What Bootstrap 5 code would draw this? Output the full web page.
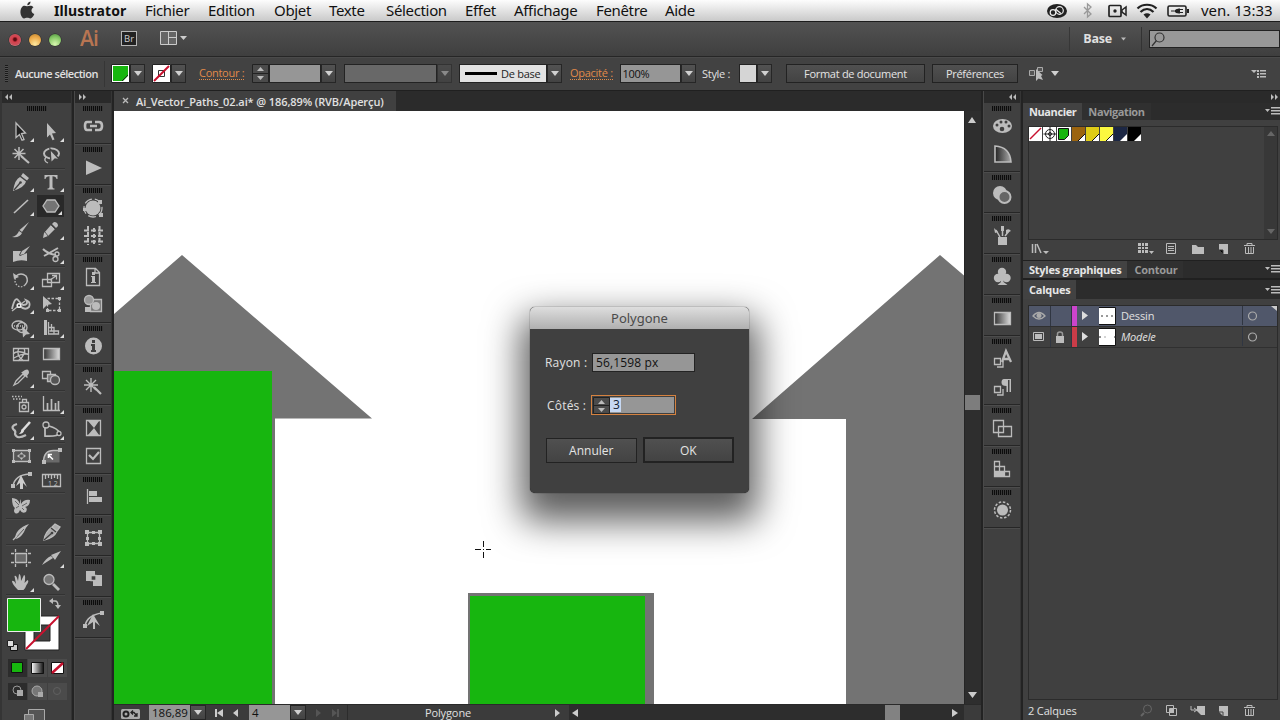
<!DOCTYPE html>
<html lang="fr">
<head>
<meta charset="utf-8">
<title>Illustrator</title>
<link href="https://cdn.jsdelivr.net/npm/bootstrap@5.3.0/dist/css/bootstrap.min.css" rel="stylesheet">
<style>
body{width:1280px;height:720px;overflow:hidden;background:#2b2b2b;font-family:"Open Sans","Noto Sans",sans-serif;font-size:11px;line-height:1;color:#e0e0e0}
svg{display:block;flex:none}
.macbar{height:22px;flex:none;background:linear-gradient(#fdfdfd,#c9c9c9);border-bottom:1px solid #1c1c1c;color:#111;font:15px/21px "Noto Sans",sans-serif;display:grid;grid-template-columns:54px 91px 63px 66px 55px 57px 79px 49px 82px 69px 380px 1fr;white-space:nowrap;letter-spacing:-.34px}
.macbar b{font-size:14px;letter-spacing:.08px}
#clock{letter-spacing:0}
.appbar{height:35px;flex:none;background:linear-gradient(#525252,#3f3f3f);border-bottom:1px solid #262626;padding-left:9px}
.light{width:12px;height:12px;border-radius:50%;margin:1px 8px 0 0;box-shadow:0 0 0 .5px #2c2c2c}
.l-red{background:radial-gradient(circle at 50% 45%,#5a0c12 0 14%,#d9404c 32%,#c9505a 60%,#f5b5b5)}
.l-yel{background:radial-gradient(circle at 50% 85%,#ffe9a0,#eba848 60%,#b8822f)}
.l-grn{background:radial-gradient(circle at 50% 85%,#d8f7b0,#84c765 60%,#4d8a3d)}
.ailogo{font:600 21px/24px "Open Sans";color:#b87552;width:39px;letter-spacing:-.8px;margin-left:11px;margin-top:-2px}
.wspace{font-size:12.500px;letter-spacing:-.2px}
.search{width:131px;height:18px;background:#989898;border:1px solid #222}
.ctlbar{height:34px;flex:none;background:#424242;border-bottom:1px solid #202020;border-top:1px solid #4a4a4a;display:grid;align-items:center;white-space:nowrap;padding-bottom:1px;letter-spacing:-.28px;
 grid-template-columns:15px 96px 19px 22px 19px 28px 53px 17px 52px 23px 93px 22px 88px 23px 50px 61px 21px 37px 18px 29px 139px 7px 86px 11px 23px 199px 1fr}
.selname{font-weight:600;letter-spacing:-.48px;border-right:1px solid #363636;width:90px;height:26px;line-height:26px}
.bx{height:19px;border:1px solid #232323}
.fld{background:#969696;color:#111}
.dd{width:15px;height:19px;border:1px solid #262626;background:linear-gradient(#525252,#434343)}
.dd,.tri{display:flex;align-items:center;justify-content:center}
.tri{width:6px}
.dd::after,.tri::after{content:"";border:4px solid transparent;border-top:5px solid #d0d0d0;border-bottom:0}
.org{color:#e08a4a;border-bottom:1px dotted #e08a4a;padding-bottom:1px;justify-self:start}
.pbtn{border:1px solid #222;background:linear-gradient(#505050,#434343);color:#e4e4e4;text-align:center;height:19px;line-height:17px}
#widthprofile{background:#686868}#brush{background:#e2e2e2;color:#222}#styl{background:#d5d5d5}#opac{line-height:17px}
.grip{width:20px;height:5px;background:repeating-linear-gradient(90deg,#0c0c0c 0 1px,#383838 1px 2px);flex:none}
.vgrip{width:3px;height:17px;background:repeating-linear-gradient(#1a1a1a 0 1px,#505050 1px 2px);margin-left:5px}
.workarea{height:629px}
.hd{height:12px;background:#2a2a2a;flex:none}
.pane{background:#404040}
.vrule{width:2px;background:#232323}
.tools{width:72px;border-left:2px solid #353535;border-right:1px solid #333}
.toolgrip{height:17px;padding-top:3px}
.tgroup{display:grid;grid-template-columns:30px 30px;grid-auto-rows:24px;margin-left:4px;width:59px;border-bottom:1px solid #333;box-shadow:0 1px #494949;margin-bottom:1px}
.tgroup>span{display:flex;align-items:center;justify-content:center;position:relative}
.more::after{content:"";position:absolute;right:2px;bottom:2px;border:2px solid;border-color:transparent #ddd #ddd transparent}
.tgroup>.picked{background:#292929;margin:1px 2px 1px 1px}
.ic{width:22px;height:22px;fill:none;stroke:#bcbcbc;stroke-width:1.3}
.ic .f,.f{fill:#bcbcbc;stroke:none}
.dk,.ic .dk{fill:#404040;stroke:none}
.fillbox{height:126px;overflow:hidden}
.strip{width:38px;border-right:1px solid #353535;border-left:1px solid #494949}
.sgroup{height:41px;border-bottom:1px solid #262626;box-shadow:0 1px #4c4c4c;padding-top:3px;display:flex;flex-direction:column;align-items:center}
.sgroup .ic{margin-top:3px;margin-bottom:3px}
.sgroup.two{height:69px}
.doctab{width:282px;height:20px;background:#404040;font-weight:600;padding-left:8px;letter-spacing:-.1px}
.canvas{width:850px;height:593px;background:#fff;position:relative}
.dlg{position:absolute;left:416px;top:196px;width:219px;height:186px;border-radius:5px;background:#404040;box-shadow:0 19px 36px 9px rgba(0,0,0,.64),0 0 1px #000;font-size:12px}
.dlgtitle{height:22px;border-radius:5px 5px 0 0;background:linear-gradient(#dedede,#b0b0b0);color:#4a4a4a;text-align:center;font:13px/23px "Noto Sans"}
#row1{padding:24px 0 0 15px}.dlab{width:47px;white-space:nowrap;letter-spacing:.2px}#radius{width:103px;padding-left:3px;line-height:17px;letter-spacing:.15px}
#row2{padding:23px 0 0 17px}#row2 .dlab{width:44px;padding-top:1px}#sides{width:85px;height:20px;border:1px solid #d58240;padding:1px}
#numsel{background:#c7d8f2;color:#123;width:11px;height:14px;line-height:14px;margin:1px 0;padding-left:3px}
#row3{padding:22px 15px 0 16px;gap:6px}#cancel{width:91px;height:25px;line-height:23px;margin-top:1px}#okb{width:92px;height:26px;border-width:2px;line-height:23px}
.scrollv{width:17px;background:#2e2e2e;border-left:1px solid #252525}
.statusbar{height:16px;background:#3b3b3b;border-top:1px solid #2a2a2a;white-space:nowrap}
.sfield{height:15px;line-height:15px;padding-left:3px;font-size:11.500px;width:41px}.sdd{width:16px;height:15px}
#toolname{width:201px;border-left:1px solid #2c2c2c;text-align:center;line-height:16px;font-size:11px;letter-spacing:-.1px}
.tabstrip{background:#2c2c2c;font-weight:700;white-space:nowrap;height:17px;flex:none;letter-spacing:-.4px}
.tabstrip span{padding:0 6px;line-height:17px}
.tabon{background:#424242;color:#e6e6e6}
.taboff{background:#303030;color:#999}
#t2{border-top:1px solid #202020;height:18px;letter-spacing:-.26px}#t2 span{padding:0 6px 0 7px}#t2 .tabon{padding-left:6px}
#t3{border-top:2px solid #202020;height:21px;letter-spacing:-.25px}#t3 span{line-height:19px}
.swatches{height:140px;padding:6px 0 0 5px}
.swarea{border:1px solid #2b2b2b;height:114px;width:250px}
#layers{margin:6px 2px 0 5px;border:1px solid #2b2b2b;height:395px}
.lrow{height:21px;display:grid;grid-template-columns:22px 21px 5px 22px 22px 122px 1fr;align-items:center;border-bottom:1px solid #303030}
.lrow>*{height:20px;display:flex;align-items:center}
.lrow>.lname{height:19px;margin-bottom:1px;letter-spacing:-.15px}
.sel{background:#50576a}
.vl{border-right:1px solid #303642}
.c-dessin{background:#cc44cc}.c-modele{background:#cb3c48}
#lfoot{height:20px;padding-left:5px;letter-spacing:-.15px}
</style>
</head>
<body class="d-flex flex-column">
<header class="macbar">
<svg width="54" height="21" viewBox="0 0 54 21"><path fill="#333" d="M30.500 1.500c.2 2-1.300 3.800-3.200 3.800-.2-1.900 1.400-3.600 3.200-3.800zM22 7c1.600-2 3.600-1 5-.7 1.400.1 4-1.700 6.500 1-3 2-2.500 5.500.8 6.800-.9 2.300-2.400 4.400-3.900 4.400-1.200 0-1.700-.7-3.200-.7s-2 .7-3.100.7C21.500 18.500 18.500 11.500 22 7z"/></svg>
<b>Illustrator</b><span>Fichier</span><span>Edition</span><span>Objet</span><span>Texte</span><span>Sélection</span><span>Effet</span><span>Affichage</span><span>Fenêtre</span><span>Aide</span>
<span class="d-flex">
<svg width="156" height="21" viewBox="1045 0 156 21" fill="none" stroke="#222"><ellipse cx="1057" cy="11" rx="10" ry="7" fill="#222" stroke="none"/><g stroke="#eee" stroke-width="1.200"><circle cx="1053" cy="12.500" r="2.800"/><circle cx="1059.500" cy="10.500" r="3.800"/><path d="M1055.500 9l5.500 4.500"/></g><path stroke="#999" stroke-width="1.300" d="M1084 7l7 7-3.500 3V4l3.500 3-7 7"/><rect x="1109" y="5.500" width="12" height="11" rx="1" stroke-width="1.700"/><circle cx="1115" cy="11" r="1.700" fill="#222" stroke="none"/><path stroke-width="1.500" d="M1122 10l4-3v8l-4-3z"/><path stroke-width="2.200" d="M1137.500 8.500c5-5 14-5 19 0M1140.500 12c4-3.800 9-3.800 13 0"/><path fill="#222" stroke="none" d="M1143.500 14.500q3.500-2.500 7 0l-3.500 4z"/><rect x="1168" y="6" width="18" height="10" rx="1.500" stroke-width="1.600"/><path stroke-width="2" d="M1188 9v4"/><path d="M1171 11h3M1180 9.500h3M1180 12.500h3"/><path fill="#222" stroke="none" d="M1174 11q2-3 6-2.500v5q-4 .5-6-2.500z"/></svg>
<span id="clock">ven. 13:33</span></span>
</header>

<div class="appbar d-flex align-items-center">
<i class="light l-red"></i><i class="light l-yel"></i><i class="light l-grn"></i>
<span class="ailogo">Ai</span>
<svg width="90" height="20" viewBox="0 0 90 20"><rect x="2.500" y="2.500" width="15" height="14" fill="#222" stroke="#b5b5b5"/><text x="5" y="13" font-size="9.500" fill="#ccc">Br</text><path d="M41.500 2.500h16v13h-16zM49.500 2.500v13M49.500 8.500h8" fill="#666" stroke="#ccc"/><path d="M61 7h7l-3.500 4z" fill="#ccc"/></svg>
<svg class="ms-auto" width="14" height="24"><path d="M.5 0v24" stroke="#373737"/></svg><span class="fw-bold wspace">Base</span>
<svg width="37" height="24" viewBox="0 0 37 24"><path d="M9 10.500h5l-2.500 3z" fill="#bbb"/><path d="M29.500 0v24" stroke="#333"/></svg>
<span class="search"><svg width="20" height="16" viewBox="0 0 20 16" fill="none" stroke="#333" stroke-width="1.200"><circle cx="9.500" cy="6.500" r="4.500"/><path d="M6.500 9.500L2 15"/></svg></span>
</div>

<div class="ctlbar">
<span class="vgrip"></span><span class="selname">Aucune sélection</span>
<svg width="19" height="19"><path fill="#fff" stroke="#222" d="M.5.500h18v18H.5z"/><path fill="#17b60f" d="M2 2h15v10l-5 5H2z"/><path stroke="#222" d="M17 11l-6 6"/></svg><span class="dd"></span>
<svg width="19" height="19"><path fill="#fff" stroke="#222" d="M.5.500h18v18H.5z"/><path fill="none" stroke="#333" d="M6.500 6.500h6v6h-6z"/><path stroke="#c8102e" stroke-width="2" d="M2 17L17 2"/></svg><span class="dd"></span>
<span class="org">Contour :</span>
<svg width="17" height="19"><path fill="#4b4b4b" stroke="#222" d="M.5.500h16v18H.5zM.5 9.500h16"/><path class="f" d="M5 7l3.500-4L12 7zM5 12l3.500 4 3.500-4z"/></svg>
<span class="bx fld"></span><span class="dd"></span>
<span class="bx" id="widthprofile"></span><span class="dd opacity-50"></span>
<span class="bx d-flex align-items-center" id="brush"><svg width="41" height="15"><path d="M5 7.500h32" stroke="#000" stroke-width="3"/></svg>De base</span><span class="dd"></span>
<span class="org">Opacité :</span>
<span class="bx fld" id="opac">&thinsp;100%</span><span class="dd"></span>
<span>Style :</span><span class="bx" id="styl"></span><span class="dd"></span>
<span class="pbtn">Format de document</span><span></span><span class="pbtn">Préférences</span><span></span>
<svg width="24" height="19"><path fill="#555" stroke="#aaa" d="M.5 6.500h5v5h-5zM8.500 3.500h5v4h-5z"/><path class="f" d="M7 5v12l2.500-2.500L14 16l-2-4 1.500-1z"/></svg><span class="tri"></span>
<svg width="20" height="19"><path class="f" d="M0 6h6L3 9zM6 6h2v2H6zM9 6h6v1.500H9zM6 9h2v2H6zM9 9h6v1.500H9zM6 12h2v2H6zM9 12h6v1.500H9z"/></svg>
</div>

<main class="workarea d-flex">
<aside class="tools pane d-flex flex-column">
<div class="hd"><svg width="20" height="12"><path class="f" d="M6 3v6L3 6zM10 3v6L7 6z"/></svg></div>
<div class="toolgrip d-flex justify-content-center"><span class="grip"></span></div>
<div class="tgroup">
<span class="more"><svg class="ic"><path fill="#222" d="M6 2l9.500 10-4 .5 2.500 6-2 .7-2.500-5.700L6 16.500z"/></svg></span>
<span class="more"><svg class="ic"><path class="f" d="M7 2l9 10-4 .5 2.500 6-2 .7L10 13.500 7 16.500z"/></svg></span>
<span><svg class="ic"><path stroke-width="2.200" d="M11 11l8 7"/><path d="M9 2v13M2.500 8.500h13M4.500 4l9 9M13.500 4l-9 9" stroke-width="1.500"/></svg></span>
<span><svg class="ic"><ellipse cx="11.500" cy="8.500" rx="7.500" ry="5" stroke-width="2"/><path d="M6 12q-3 4 2 6"/><path fill="#bcbcbc" stroke="#404040" d="M10 4l10 11-5-1-4 4z"/></svg></span>
</div>
<div class="tgroup">
<span class="more"><svg class="ic"><path class="f" d="M13 2l6 5-2 2.500L11 5zM10 6l6 4.500Q15 16 3 20 5 8 10 6z"/><path stroke="#404040" d="M4 19l6-7"/><circle cx="10.500" cy="11.500" r="1.300" class="dk"/></svg></span>
<span class="more"><svg class="ic"><path class="f" d="M4.500 4h13v4h-1q-.5-2.800-4-2.800V16q0 1.500 2 1.500v1h-7v-1q2 0 2-1.500V5.200q-3.500 0-4 2.800h-1z"/></svg></span>
<span class="more"><svg class="ic"><path d="M4 18L18 5" stroke-width="1.700"/></svg></span>
<span class="more picked"><svg class="ic"><path fill="#747474" d="M7 5h8l4 6-4 6H7l-4-6z"/></svg></span>
<span><svg class="ic"><path class="f" d="M19 3l-7 10-2.500-2zM9 12l3 2q-2 5-10 4 5-1 7-6z"/></svg></span>
<span class="more"><svg class="ic"><path class="f" d="M14 3q4 0 4 4l-2 2-4-4zM11 6l4 4-7 7-5 2 1-5z"/><path stroke="#404040" stroke-width=".8" d="M11 6l4 4M5 13l3 4"/></svg></span>
<span><svg class="ic"><path class="f" d="M3 8h8l-2 4 1 1 7-3v8q-7-2-14 1z"/><path class="f" d="M20 3l-6 8-4 1 2-4z"/></svg></span>
<span class="more"><svg class="ic"><path d="M3 6q5 5 13 6M4 13L18 5" stroke-width="2"/><circle cx="15.500" cy="16" r="2.500"/><circle cx="17" cy="11" r="2"/></svg></span>
</div>
<div class="tgroup">
<span class="more"><svg class="ic"><path d="M6 7q5-4 10 0 3 5-1 9" stroke-width="1.500"/><path d="M15 16q-5 4-9-1-2-3 0-8" stroke-dasharray="1.500 1.500"/><path class="f" d="M3 4l1 6 5-2z"/></svg></span>
<span class="more"><svg class="ic"><path d="M7.500 4.500h12v9h-12zM2.500 10.500h9v7h-9z"/><path d="M10 11l6-4M12 6.500h4.500v4"/></svg></span>
<span class="more"><svg class="ic"><path d="M2 16q3-13 6-9t5 5q6 0 3-5 5 2 3 7-4 4-9-1" stroke-width="1.800"/><path d="M2 18l13-10"/><circle cx="9" cy="12.500" r="1.800" fill="#404040" stroke="#eee" stroke-width="1.500"/></svg></span>
<span><svg class="ic"><path d="M7.500 5.500h12v12h-12z" stroke-dasharray="2.500 1.500"/><path class="f" d="M18 4h3v3h-3zM18 16h3v3h-3zM6 16h3v3H6z"/><path class="f" d="M3 3l9 8-5 1-4 4z"/></svg></span>
<span class="more"><svg class="ic"><ellipse cx="8.500" cy="8.500" rx="6.500" ry="4.500"/><circle cx="12" cy="10.500" r="5"/><path stroke-dasharray="1 1" d="M2 9h12"/><path class="f" d="M12 9l8 8-4 .5-3 3z"/></svg></span>
<span class="more"><svg class="ic"><path class="f" d="M4 3h3v15H4z"/><path d="M8.500 5v12h10v-3h-9M11.500 7v7M8 10.500h6v7"/></svg></span>
</div>
<div class="tgroup">
<span><svg class="ic"><path d="M3.500 5.500h15v12h-15zM3 11q5-5 16 1M9 5q-4 7 5 13M14 5q3 6-6 13M4 15q8-5 15-4"/></svg></span>
<span><svg class="ic"><defs><linearGradient id="gr"><stop stop-color="#333"/><stop offset="1" stop-color="#ddd"/></linearGradient></defs><path fill="url(#gr)" d="M3.500 5.500h16v11h-16z"/></svg></span>
<span class="more"><svg class="ic"><path d="M4 18l2-4 7-7 2 2-7 7z"/><path class="f" d="M12 5l3-2q4-2 4 3l-2 3 1 1-1 1-6-6z"/></svg></span>
<span><svg class="ic"><path d="M2.500 4.500h8v7h-8z"/><path fill="#777" d="M7.500 7.500h8v7h-8z"/><circle cx="15" cy="13" r="4.500" fill="#555"/></svg></span>
</div>
<div class="tgroup">
<span class="more"><svg class="ic"><path d="M9.500 9.500h9v9h-9zM12.500 6.500h4v3h-4z"/><circle cx="14" cy="14" r="2"/><path stroke-dasharray="1.500 1.500" d="M2 3.500h10M3 6h8"/></svg></span>
<span class="more"><svg class="ic"><path d="M3.500 3v14.500H20"/><path d="M7.500 17V10M11.500 17V6M15.500 17v-7M18.500 17V8" stroke-width="1.700"/></svg></span>
</div>
<div class="tgroup">
<span class="more"><svg class="ic"><path stroke-width="2.200" d="M7 5q-7 2-3 6 2 1 1 4 2 6 11 1"/><path stroke="#ddd" stroke-width="2.600" d="M20 3l-8 9"/><path fill="#ddd" stroke="none" d="M12 10l2 2q-1 3-5 3 2-2 3-5z"/></svg></span>
<span class="more"><svg class="ic"><path stroke-width="1.800" d="M5 8v9q12 1 15-3-3-5-11-7"/><circle cx="6" cy="6" r="3"/><circle cx="19" cy="14.500" r="2" fill="#222"/></svg></span>
</div>
<div class="tgroup">
<span><svg class="ic"><path fill="#555" d="M3.500 5.500h16v11h-16z"/><path class="f" d="M2 4h3v3H2zM18 4h3v3h-3zM2 15h3v3H2zM18 15h3v3h-3zM11.500 7l2 2.500h-4zM11.500 15l2-2.500h-4zM7 11l2.500-2v4zM16 11l-2.500-2v4z"/></svg></span>
<span><svg class="ic"><path fill="#6a6a6a" d="M3.500 17.500q0-12 10-12h6v12z" stroke="none"/><path d="M3.500 17.500q0-12 10-12h6" stroke-width="1.500"/><path class="f" d="M2 15h4v4H2zM18 3h4v4h-4z"/><path stroke="#fff" stroke-width="1.600" d="M8 9.500l5 5M8.500 9v4M8 9.500h4"/></svg></span>
<span><svg class="ic"><path d="M3 17Q5 6 19 5" stroke-width="1.500"/><path class="f" d="M1 15h4v4H1zM18 3h4v4h-4z"/><path fill="#ccc" stroke="none" d="M11 6l6 12-4-4v6h-3v-6l-4 3z"/></svg></span>
<span><svg class="ic"><path d="M2.500 5.500h18v12h-18zM5.500 6v4M8.500 6v3M11.500 6v4M14.500 6v3M17.500 6v4"/><text x="8" y="16.500" font-size="7" class="f">1 2</text></svg></span>
</div>
<div class="tgroup">
<span><svg class="ic"><path class="f" d="M2 3q6 0 8 6 0-4 1-5v5q3-5 9-4 0 6-5 7 3 1 1 5-4 2-6-2-2 5-5 3-2-2 0-5-3-2-3-10z"/><path stroke="#404040" stroke-width=".7" d="M5 6l4 4M6 13l3-2M17 8l-5 3M14 15l-2-2"/></svg></span>
</div>
<div class="tgroup">
<span><svg class="ic"><path class="f" d="M5 18Q5 8 19 3q-3 3-5 8Q10 18 5 18z"/><path stroke="#404040" stroke-width=".8" d="M5 18L14 8"/><path d="M3 19l4-4"/></svg></span>
<span><svg class="ic"><path d="M4 19q1-8 8-13l5 4Q14 17 4 19zM12 6l3-3 5 3-3 4" fill="#aaa"/><path stroke="#404040" d="M4 19l8-7M11 7l5 4"/><circle cx="12" cy="12" r="1.300" class="dk"/></svg></span>
</div>
<div class="tgroup">
<span><svg class="ic"><path fill="#686868" d="M5.500 6.500h11v9h-11zM1 6.500h3M18 6.500h3M1 15.500h3M18 15.500h3M5.500 2v3M16.500 2v3M5.500 17v3M16.500 17v3"/></svg></span>
<span class="more"><svg class="ic"><path class="f" d="M2 18q4-7 9-9l2 2zM11 8l10-4q-3 4-6 9z"/></svg></span>
<span class="more"><svg class="ic"><path class="f" d="M8 19Q2 13 2 10q2-1 4 3L4.500 5q2-1 3.500 5l1-7q2 0 2 7l3-6q2 0 .5 8l3-3q2 1-1 5-1 3-3 5z"/></svg></span>
<span><svg class="ic"><circle cx="9" cy="8.500" r="5" fill="#777"/><path stroke-width="2.800" d="M13 13l6 6"/></svg></span>
</div>
<div class="fillbox">
<svg width="68" height="126" viewBox="2 596 68 126"><path fill="#fff" stroke="#222" d="M25 616h34v34H25z"/><path fill="#404040" stroke="#222" d="M34 625h16v16H34z"/><path stroke="#c8102e" stroke-width="2" d="M26 649l33-33"/><path fill="#17b60f" stroke="#eee" d="M7.500 598.500h33v33h-33z"/><path fill="none" stroke="#bbb" stroke-width="1.500" d="M51 601h4q3 0 3 5"/><path class="f" d="M49 601l4-3v6zM55 605h6l-3 4z"/><path fill="#ccc" stroke="#111" d="M10.500 644.500h7v6h-7z"/><path fill="#ddd" stroke="#222" d="M7.500 640.500h6v6h-6z"/>
<path fill="#2c2c2c" d="M8 659h19v18H8zM8 683h19v17H8z"/><path fill="#4b4b4b" d="M28 659h19v18H28zM48 659h19v18H48zM28 683h19v17H28zM48 683h19v17H48z"/><path fill="#17b60f" stroke="#111" d="M11.500 662.500h11v10h-11z"/><path fill="url(#gr3)" stroke="#111" d="M31.500 662.500h12v11h-12z"/><defs><linearGradient id="gr3"><stop stop-color="#fff"/><stop offset="1" stop-color="#111"/></linearGradient></defs><path fill="#fff" stroke="#111" d="M51.500 662.500h12v11h-12z"/><path stroke="#c8102e" stroke-width="2.500" d="M52 673l11-10"/><circle cx="17" cy="690" r="4" fill="none" stroke="#999"/><path fill="#aaa" d="M17 690h6v6h-6z"/><circle cx="37" cy="691" r="5" fill="#777" stroke="#aaa"/><path fill="#aaa" d="M38 692h5v5h-5z"/><circle cx="57" cy="691" r="3.500" fill="none" stroke="#606060"/><path fill="#555" stroke="#aaa" d="M28.500 709.500h16v12h-16z"/><path fill="#777" stroke="#aaa" d="M24.500 714.500h9v8h-9z"/></svg>
</div>
</aside>
<div class="vrule"></div>
<aside class="strip pane">
<div class="hd"><svg width="20" height="12"><path class="f" d="M4 3v6l3-3zM8 3v6l3-3z"/></svg></div>
<div class="sgroup"><span class="grip"></span><svg class="ic mt-1"><path stroke-width="2.600" d="M10 7H5q-2 0-2 4t2 4h5M13 7h4q3 0 3 4t-3 4h-4M8 11h7"/></svg></div>
<div class="sgroup"><span class="grip"></span><svg class="ic"><path class="f" d="M4 5.500L20 13 4 20z"/></svg></div>
<div class="sgroup two"><span class="grip"></span><svg class="ic"><circle cx="11" cy="12" r="7.500" class="f"/><circle cx="11" cy="12" r="9" stroke-dasharray="8 3"/><path class="f" d="M16 4h4v4h-4zM17 17h4v4h-4zM1 12h3v3H1z"/></svg><svg class="ic"><path stroke-width="2" stroke-dasharray="5 2" d="M2 6.500h19M2 12h19M2 17.500h19"/><path stroke-width="2" stroke-dasharray="4 2" d="M6 2v19M12 4v17M17.500 2v19"/></svg></div>
<div class="sgroup two"><span class="grip"></span><svg class="ic"><path d="M4.500 3.500h9l4 4v13h-13zM13 4v4h4"/><path class="f" d="M10 7h3v3h-3zM9 11h4v6h1v1H9v-1h1v-5H9z"/></svg><svg class="ic"><path fill="#777" d="M8.500 6.500h11v12h-11z"/><circle cx="7" cy="7" r="4.500" fill="#999"/><circle cx="14" cy="13" r="4" class="f"/><path class="f" d="M3 14h5v5H3z"/></svg></div>
<div class="sgroup"><span class="grip"></span><svg class="ic"><circle cx="11.500" cy="12" r="8.500" class="f"/><path class="dk" d="M10 6h3v3h-3zM9 10h4v6h1v2H9v-2h1v-4H9z"/></svg></div>
<div class="sgroup"><span class="grip"></span><svg class="ic"><path stroke-width="2.200" d="M12 12l7 7"/><path d="M9 3v14M2 10h14M4 5l10 10M14 5L4 15" stroke-width="1.400"/></svg></div>
<div class="sgroup two"><span class="grip"></span><svg class="ic"><path d="M4.500 4.500h14v15h-14z"/><path class="f" d="M6 5h11l-5 7zM6 19h11l-5-7z"/></svg><svg class="ic"><path d="M4.500 4.500h14v15h-14z"/><path stroke-width="2.200" d="M7 11l4 4 6-7"/></svg></div>
<div class="sgroup"><span class="grip"></span><svg class="ic"><path d="M5.500 4v15"/><path class="f" d="M7 6h8v5H7zM7 12h13v5H7z"/></svg></div>
<div class="sgroup"><span class="grip"></span><svg class="ic"><path d="M5.500 6.500h12v11h-12z"/><path class="f" d="M3 4h4v4H3zM10 5h3v3h-3zM16 4h4v4h-4zM3 16h4v4H3zM16 16h4v4h-4zM10 16h3v3h-3zM4 11h3v3H4zM16 11h3v3h-3z"/></svg></div>
<div class="sgroup"><span class="grip"></span><svg class="ic"><path class="f" d="M4 4h9v4h7v11h-9v-5H4z"/><path fill="#404040" d="M9 8.500h5v5H9z"/></svg></div>
<div class="sgroup"><span class="grip"></span><svg class="ic"><path d="M3 18Q5 7 20 5" stroke-width="1.600"/><path class="f" d="M1 16h4v4H1zM18 3h4v4h-4zM11 6l7 12-5-4v7h-2v-7l-6 4z"/></svg></div>
</aside>
<div class="vrule"></div>

<section class="d-flex flex-column">
<div class="doctab d-flex align-items-center"><svg width="14" height="10"><path stroke="#bbb" stroke-width="1.300" d="M1 2l5 5M6 2L1 7"/></svg><span>Ai_Vector_Paths_02.ai* @ 186,89% (RVB/Aperçu)</span></div>
<div class="d-flex">
<div class="canvas">
<svg width="850" height="593" viewBox="114 111 850 593"><g fill="#737373"><path d="M182 255L372 418.500H275V704H114V314z"/><path d="M940 255l24 20.500V704H846V419h-94z"/><path d="M468 593h186v111H468z"/></g><path fill="#17b60f" d="M114 371h158v333H114zM470 596h175v108H470z"/><path stroke="#111" stroke-width="1" d="M475 549.500h6M486 549.500h5M483.500 541v6M483.500 552v6M483 549.500h1"/></svg>
<div class="dlg">
<div class="dlgtitle">Polygone</div>
<div class="d-flex align-items-center" id="row1"><span class="dlab">Rayon :</span><span class="bx fld" id="radius">56,1598 px</span></div>
<div class="d-flex align-items-center" id="row2"><span class="dlab">Côtés :</span><span id="sides" class="d-flex"><svg width="17" height="18"><path fill="#4b4b4b" stroke="#222" d="M.5.500h16v16H.5zM.5 8.500h16"/><path class="f" d="M5 7l3.500-4L12 7zM5 11l3.500 4 3.500-4z"/></svg><span class="fld flex-grow-1 d-flex"><span id="numsel">3</span></span></span></div>
<div class="d-flex" id="row3"><span class="pbtn" id="cancel">Annuler</span><span class="pbtn" id="okb">OK</span></div>
</div>
</div>
<div class="scrollv"><svg width="16" height="593"><path fill="#ccc" d="M3 12l4-6 4 6zM3 581h9l-4.500 6z"/><path fill="#7d7d7d" d="M0 284h15v15H0z"/></svg></div>
</div>
<div class="statusbar d-flex">
<svg width="35" height="15"><rect x="7" y="4" width="19" height="10" rx="1.500" fill="#aaa"/><circle cx="12" cy="9" r="2.500" fill="#aaa" stroke="#222" stroke-width="2"/><path stroke="#222" fill="none" stroke-width="1.300" d="M17 7.500h3l3 3.500M19 5.500l-2 2 2 2M20 11h3V8"/></svg>
<span class="fld sfield">186,89</span><span class="dd sdd"></span>
<svg width="43" height="15"><path fill="#ccc" d="M9 4h2v8H9zM17 4v8l-6-4zM32 4v8l-5-4z"/></svg>
<span class="fld sfield">4</span><span class="dd sdd"></span>
<svg width="41" height="15"><path fill="#555" d="M10 4v8l5-4zM26 4v8l5-4zM31 4h2v8h-2z"/></svg>
<span id="toolname">Polygone</span>
<svg width="416" height="15" viewBox="548 0 416 15"><path fill="#2d2d2d" d="M569 0h395v16H569z"/><path fill="#ccc" d="M555 4v8l5-4zM578 4v8l-6-4zM952 4v8l6-4z"/><path fill="#828282" d="M885 0h15v15h-15z"/></svg>
</div>
</section>
<div class="vrule"></div>

<aside class="strip pane">
<div class="hd"><svg width="36" height="12"><path class="f" d="M28 3v6l-3-3zM32 3v6l-3-3z"/></svg></div>
<div class="sgroup two"><span class="grip"></span><svg class="ic"><ellipse cx="11.500" cy="12" rx="9.500" ry="7" class="f"/><g><circle class="dk" cx="6" cy="11" r="1.500"/><circle class="dk" cx="10" cy="8" r="1.500"/><circle class="dk" cx="15" cy="8" r="1.500"/><circle class="dk" cx="18" cy="12" r="1.500"/><circle class="dk" cx="11" cy="15" r="2.300"/></g></svg><svg class="ic"><path fill="url(#gr2)" stroke-width="1.600" d="M4 4v16h16Q19 5 4 4z"/><defs><linearGradient id="gr2"><stop stop-color="#222"/><stop offset="1" stop-color="#aaa"/></linearGradient></defs></svg></div>
<div class="sgroup"><span class="grip"></span><svg class="ic"><circle cx="9" cy="10" r="7" class="f"/><circle cx="13.500" cy="14" r="6" fill="#666" stroke-width="2"/></svg></div>
<div class="sgroup"><span class="grip"></span><svg class="ic"><path class="f" d="M7 13h9v8H7z"/><path stroke-width="1.500" d="M9 13L5 6M11.500 12V4M14 12l4-5"/><path class="f" d="M10 2h3v5h-3zM15 6q3-2 5 1-3 1-5 3zM3 4l4 4-3 1z"/></svg></div>
<div class="sgroup"><span class="grip"></span><svg class="ic"><g><circle class="f" cx="11" cy="7" r="4.200"/><circle class="f" cx="7" cy="13" r="4.200"/><circle class="f" cx="15.500" cy="13" r="4.200"/><path class="f" d="M10 10h2.500v7l4 3h-10l3.500-3z"/></g></svg></div>
<div class="sgroup"><span class="grip"></span><svg class="ic"><path fill="url(#gr)" d="M3.500 6.500h16v12h-16z"/></svg></div>
<div class="sgroup two"><span class="grip"></span><svg class="ic"><path d="M3.500 11.500h6v6h-6zM6 20h6v-6"/><path stroke-width="2.300" d="M11 15l4-11 5 11M12 12h6"/></svg><svg class="ic"><path d="M3.500 11.500h6v6h-6zM6 20h6v-6"/><path class="f" d="M13 4h7v13h-1.500V5H17v12h-1.500v-6q-5 0-5-3.500T13 4z"/></svg></div>
<div class="sgroup"><span class="grip"></span><svg class="ic"><path fill="#404040" d="M2.500 4.500h10v12h-10zM7.500 10.500h13v10h-13z"/></svg></div>
<div class="sgroup"><span class="grip"></span><svg class="ic"><path class="f" d="M4 15h10v4H4z"/><path d="M3.500 4.500h5v15h-5zM3.500 9.500h10v10M3.500 14.500h15v5h-15"/></svg></div>
<div class="sgroup"><span class="grip"></span><svg class="ic"><circle cx="11.500" cy="12" r="5.500" class="f"/><circle cx="11.500" cy="12" r="8" stroke-dasharray="2.500 1.700" stroke-width="1.500"/></svg></div>
</aside>
<div class="vrule"></div>

<aside class="pane flex-grow-1 d-flex flex-column overflow-hidden">
<div class="hd d-flex justify-content-end"><svg width="14" height="12"><path class="f" d="M5 3v6l3-3zM9 3v6l3-3z"/></svg></div>
<div class="tabstrip d-flex"><span class="tabon">Nuancier</span><span class="taboff">Navigation</span><svg class="ms-auto" width="16" height="17"><path class="f" d="M1 6h5L3.500 9zM7 4h9v1.500H7zM7 7h9v1.500H7zM7 10h9v1.500H7z"/></svg></div>
<div class="swatches">
<div class="swarea d-flex justify-content-between">
<svg width="130" height="14"><path fill="#fff" d="M0 0h13v14H0zM14 0h13v14H14zM28 0h14v14H28zM43 0h13v14H43zM57 0h13v14H57zM71 0h13v14H71zM85 0h13v14H85zM99 0h13v14H99z"/><path stroke="#c8102e" stroke-width="1.500" d="M1 12L12 1"/><g fill="none" stroke="#222"><circle cx="21" cy="7" r="4.500"/><circle cx="21" cy="7" r="1.500"/><path d="M14.500 7h13M21 0v14"/></g><path fill="#17b60f" stroke="#111" d="M29.500 1.500h10v7l-4 4h-6z"/><path fill="#9b640f" d="M43 0h13v7l-7 7h-6z"/><path fill="#dfcc17" d="M57 0h13v7l-7 7h-6z"/><path fill="#fbf83f" d="M71 0h13v7l-7 7h-6z"/><path fill="#1c2744" d="M85 0h13v7l-7 7h-6z"/><path fill="#000" d="M99 0h13v7l-7 7h-6z"/><path stroke="#111" d="M49 14l7-7M63 14l7-7M77 14l7-7"/></svg>
<svg width="13" height="112"><path fill="#383838" d="M0 0h13v112H0z"/><path fill="#666" d="M3 9l4-5 4 5zM3 102h8l-4 5z"/></svg>
</div>
<svg width="250" height="20" viewBox="1028 240 250 20"><path stroke="#bbb" fill="none" stroke-width="1.500" d="M1032.500 244v9M1035.500 244v9M1037 244l4 9"/><path class="f" d="M1043 251h6l-3 3zM1138 243h10v10h-10zM1149 251h5l-2.500 3zM1192 245h4l2 2h6v7h-12zM1219 244h9v10h-5l-4-4z"/><path stroke="#404040" d="M1138 246.500h10M1138 249.500h10M1141.500 243v10M1144.500 243v10M1219 250h4v4"/><path fill="none" stroke="#bbb" d="M1166.500 243.500h9v10h-9zM1168 246.500h6M1168 248.500h6M1168 250.500h6M1244 245.500h11M1247 245v-1.500h5v1.500M1245.500 247v6.500h8V247M1248.500 247v6M1251 247v6"/></svg>
</div>
<div class="tabstrip d-flex" id="t2"><span class="tabon">Styles graphiques</span><span class="taboff">Contour</span><svg class="ms-auto" width="16" height="17"><path class="f" d="M1 6h5L3.500 9zM7 4h9v1.500H7zM7 7h9v1.500H7zM7 10h9v1.500H7z"/></svg></div>
<div class="tabstrip d-flex" id="t3"><span class="tabon">Calques</span><svg class="ms-auto" width="16" height="17"><path class="f" d="M1 8h5l-2.500 3zM7 6h9v1.500H7zM7 9h9v1.500H7zM7 12h9v1.500H7z"/></svg></div>
<div id="layers">
<div class="lrow sel"><span class="vl"><svg width="20" height="20"><path fill="none" stroke="#aaa" stroke-width="1.300" d="M4 10q6-7 12 0-6 6-12 0z"/><circle cx="10" cy="9.500" r="2.500" fill="#aaa"/></svg></span><span class="vl"></span><span class="c-dessin"></span><svg width="22" height="20"><path fill="#ddd" d="M5 5v9l6-4.500z"/></svg><svg width="22" height="20"><path fill="#fff" stroke="#111" d="M-.5 1.500h17v17h-17z"/><path stroke="#999" stroke-width="2" stroke-dasharray="2 3" d="M2 10h13"/></svg><span class="vl lname">Dessin</span><svg width="34" height="20"><circle cx="9.500" cy="10" r="4" fill="none" stroke="#aaa" stroke-width="1.200"/><path fill="#ccc" d="M28 0h6v5z"/></svg></div>
<div class="lrow"><span class="vl"><svg width="20" height="20"><path fill="none" stroke="#bbb" d="M4.500 5.500h10v8h-10z"/><path class="f" d="M6 7h7v5H6z"/></svg></span><span class="vl"><svg width="20" height="20"><path class="f" d="M5 9h8v7H5z"/><path fill="none" stroke="#999" stroke-width="1.500" d="M6.500 9V7q0-2 2.500-2t2.500 2v2"/></svg></span><span class="c-modele"></span><svg width="22" height="20"><path fill="#ddd" d="M5 5v9l6-4.500z"/></svg><svg width="22" height="20"><path fill="#fff" stroke="#111" d="M-.5 1.500h17v17h-17z"/><path stroke="#222" d="M0 10h2M15 10h2"/><path stroke="#aaa" d="M5 10h2"/></svg><span class="vl lname fst-italic">Modele</span><svg width="34" height="20"><circle cx="9.500" cy="10" r="4" fill="none" stroke="#aaa" stroke-width="1.200"/></svg></div>
</div>
<div class="d-flex align-items-center" id="lfoot"><span>2 Calques</span>
<svg class="ms-auto" width="142" height="19" viewBox="1138 701 142 19"><g fill="none" stroke="#666"><circle cx="1147.500" cy="709" r="4"/><path stroke-width="2" d="M1144 713l-3 3"/></g><path fill="none" stroke="#bbb" d="M1166.500 705.500h7v7h-7zM1169.500 708.500h7v7h-7zM1191 706v4h5M1194 708l3 2-3 2"/><path class="f" d="M1170 709h4v4h-4zM1197 706h8v9h-4l-4-4zM1219 706h9v10h-5l-4-4z"/><path stroke="#404040" fill="none" d="M1219 712h4v4"/><path fill="none" stroke="#bbb" d="M1244 707.500h11M1247 707v-1.500h5v1.500M1245.500 709v6.500h8V709M1248.500 709v6M1251 709v6"/></svg></div>
</aside>
</main>
<script src="https://cdn.jsdelivr.net/npm/bootstrap@5.3.0/dist/js/bootstrap.bundle.min.js"></script>
</body>
</html>
